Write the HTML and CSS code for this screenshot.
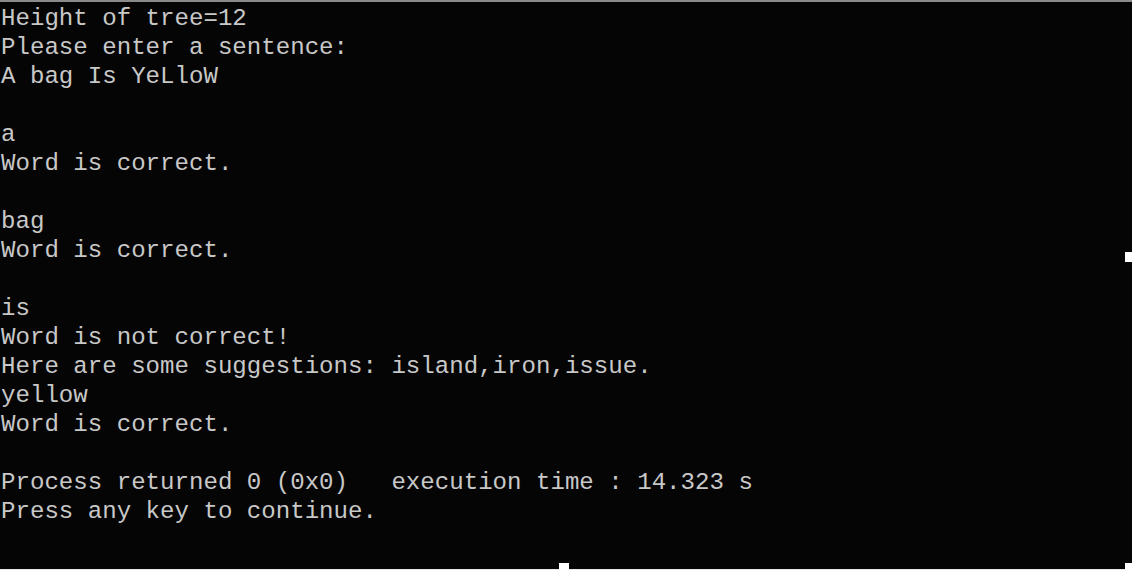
FILE: index.html
```html
<!DOCTYPE html>
<html>
<head>
<meta charset="utf-8">
<link rel="stylesheet" href="styles.css">
</head>
<body>
<div class="frame">
<pre class="console">Height of tree=12
Please enter a sentence:
A bag Is YeLloW

a
Word is correct.

bag
Word is correct.

is
Word is not correct!
Here are some suggestions: island,iron,issue.
yellow
Word is correct.

Process returned 0 (0x0)   execution time : 14.323 s
Press any key to continue.</pre>
<span class="handle handle-right"></span>
<span class="handle handle-bottom"></span>
<span class="handle handle-corner"></span>
</div>
</body>
</html>
```
FILE: styles.css
```css
html, body {
  margin: 0;
  padding: 0;
  background: #000;
  width: 1132px;
  height: 570px;
  overflow: hidden;
}
.frame {
  position: relative;
  width: 1132px;
  height: 570px;
  box-sizing: border-box;
  background: #050505;
  border-top: 2px solid #8a8a8a;
  border-bottom: 1px solid #e8e8e8;
}
.console {
  margin: 0;
  padding: 2px 0 0 1px;
  font-family: "Liberation Mono", "DejaVu Sans Mono", monospace;
  font-size: 24.1px;
  line-height: 29px;
  color: #c8c8c8;
  white-space: pre;
}
.handle {
  position: absolute;
  background: #ffffff;
}
.handle-right {
  left: 1125px;
  top: 250px;
  width: 7px;
  height: 10px;
}
.handle-bottom {
  left: 559px;
  top: 561px;
  width: 10px;
  height: 7px;
}
.handle-corner {
  left: 1125px;
  top: 561px;
  width: 7px;
  height: 7px;
}
```
